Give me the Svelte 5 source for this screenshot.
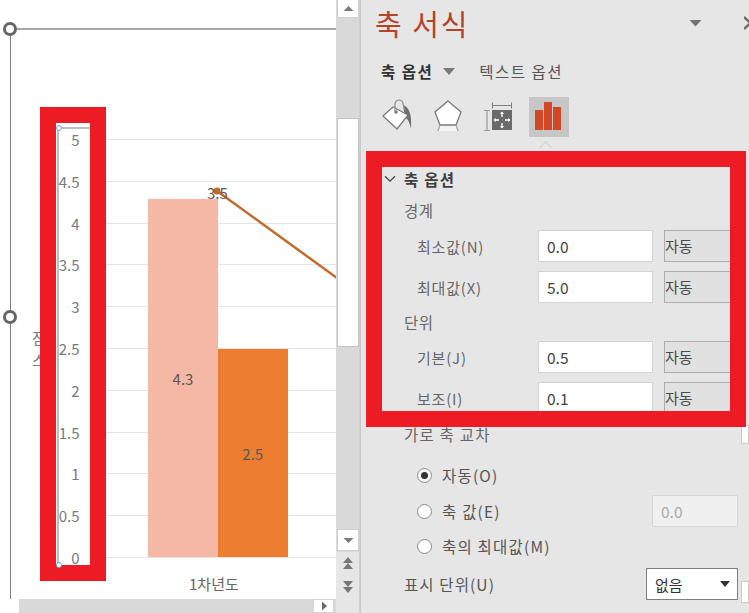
<script>
  const ticks = ['5','4.5','4','3.5','3','2.5','2','1.5','1','0.5','0'];
  const bounds = [['최소값(N)','0.0'],['최대값(X)','5.0']];
  const units = [['기본(J)','0.5'],['보조(I)','0.1']];
</script>

<div class="app">
  <div class="editor">
    <div class="chart">
      <div class="frame-top"></div>
      <div class="frame-left"></div>
      <span class="handle h1"></span>
      <span class="handle h2"></span>
      <span class="axis-title t1">점</span>
      <span class="axis-title t2">스</span>

      {#each ticks as t, i}
        <div class="grid" style="top:{139 + i * 41.8}px"></div>
      {/each}

      <div class="bar pink">4.3</div>
      <div class="bar orange">2.5</div>
      <span class="cat">1차년도</span>

      <svg class="line" width="337" height="300" viewBox="0 0 337 300">
        <line x1="217" y1="191" x2="337" y2="278" stroke="#c5692d" stroke-width="2.5"/>
        <circle cx="217" cy="191" r="3.6" fill="#c5692d"/>
      </svg>
      <span class="pt">3.5</span>

      <div class="red-v">
        <div class="axis"></div>
        <span class="blue b1"></span>
        <span class="blue b2"></span>
        {#each ticks as t, i}
          <span class="tick" style="top:{6 + i * 41.8}px">{t}</span>
        {/each}
      </div>
    </div>

    <div class="hbar">
      <div class="hbtn first"></div>
      <div class="htrack"></div>
      <div class="hbtn last">
        <svg width="8" height="10" viewBox="0 0 8 10"><path d="M2 0.5 7 5 2 9.5z" fill="#6a6a6a"/></svg>
      </div>
    </div>
  </div>

  <div class="vbar">
    <div class="vtrack">
      <div class="vbtn top">
        <svg width="11" height="7" viewBox="0 0 11 7"><path d="M5.5 1 10.5 6H.5z" fill="#7a7a7a"/></svg>
      </div>
      <div class="thumb"></div>
      <div class="vbtn bottom">
        <svg width="11" height="7" viewBox="0 0 11 7"><path d="M5.5 6 10.5 1H.5z" fill="#7a7a7a"/></svg>
      </div>
    </div>
    <div class="pg">
      <svg width="12" height="13" viewBox="0 0 12 13"><path d="M6 0 11 6H1zM6 6 11 12H1z" fill="#777"/></svg>
      <svg width="12" height="13" viewBox="0 0 12 13"><path d="M6 6 11 0H1zM6 12 11 6H1z" fill="#777"/></svg>
    </div>
  </div>

  <div class="panel">
    <header class="title-row">
      <h1>축 서식</h1>
      <svg class="tri-title" width="13" height="8" viewBox="0 0 13 8"><path d="M0.5 1h12L6.5 7.5z" fill="#737373"/></svg>
      <svg class="close" width="8" height="14" viewBox="0 0 8 14"><path d="M0 1 6.5 7 0 13" fill="none" stroke="#6e6e6e" stroke-width="2.4"/></svg>
    </header>

    <div class="tabs">
      <span class="tab on">축 옵션</span>
      <svg width="12" height="7" viewBox="0 0 12 7"><path d="M0 0h12L6 7z" fill="#7a7a7a"/></svg>
      <span class="tab">텍스트 옵션</span>
    </div>

    <div class="icons">
      <svg class="ic" width="40" height="40" viewBox="0 0 40 40">
        <path d="M24 8c6 2 9 9 8 24-1-6-3-10-6-12z" fill="#6e6e6e"/>
        <path d="M14 10 29 18 18 32 4 19z" fill="#fff" stroke="#7a7a7a" stroke-width="1.3"/>
        <path d="M16 14V7a4 4 0 0 1 8 0l2 6" fill="none" stroke="#8a8a8a" stroke-width="1.2"/>
        <circle cx="17" cy="15" r="1.8" fill="#7a7a7a"/>
      </svg>
      <svg class="ic" width="40" height="40" viewBox="0 0 40 40">
        <path d="M21 4 34 15 29 28H13L8 15z" fill="#fff" stroke="#7f7f7f" stroke-width="1.4"/>
        <rect x="12" y="29" width="18" height="5" fill="#f4f4f4"/>
        <path d="M13 28 11 34M29 28 31 34" stroke="#a5a5a5" stroke-width="1.3"/>
      </svg>
      <svg class="ic size" width="40" height="40" viewBox="0 0 40 40">
        <path d="M11 8.500H31M11.500 5.500v6M30.500 5.500v6" stroke="#7f7f7f" fill="none"/>
        <path d="M3 13.500h6M3 33.500h6M6 13.500v20" stroke="#9a9a9a" fill="none" stroke-width="1.2"/>
        <rect x="11" y="13" width="20" height="20" fill="#6a6a6a"/>
        <path d="M21 15v5M21 26v5M13 23h5M24 23h5" stroke="#fff" stroke-width="1.3"/>
        <path d="M21 14.500l-2 2.500h4zM21 31.500l-2-2.500h4zM12.500 23l2.500-2v4zM29.500 23l-2.500-2v4z" fill="#fff"/>
      </svg>
      <div class="ic-on">
        <svg width="40" height="40" viewBox="0 0 40 40">
          <rect x="6" y="13" width="8" height="20" fill="#d24726"/>
          <rect x="15" y="5" width="8" height="28" fill="#d24726"/>
          <rect x="24" y="10" width="8" height="23" fill="#d24726"/>
        </svg>
      </div>
    </div>

    <div class="notch"></div>

    <section class="form">
      <div class="sec-head">
        <svg width="12" height="8" viewBox="0 0 12 8"><path d="M1 1.200 6 6.200 11 1.200" fill="none" stroke="#444" stroke-width="1.300"/></svg>
        <span>축 옵션</span>
      </div>

      <div class="group">경계</div>
      {#each bounds as [label, val]}
        <div class="row">
          <span class="lab">{label}</span>
          <div class="input">{val}</div>
          <div class="auto">자동</div>
        </div>
      {/each}

      <div class="group g2">단위</div>
      {#each units as [label, val]}
        <div class="row">
          <span class="lab">{label}</span>
          <div class="input">{val}</div>
          <div class="auto">자동</div>
        </div>
      {/each}

      <div class="group g3">가로 축 교차</div>

      <div class="radio r1"><span class="dot checked"></span><span>자동(O)</span></div>
      <div class="radio r2">
        <span class="dot"></span><span>축 값(E)</span>
        <div class="disabled">0.0</div>
      </div>
      <div class="radio r3"><span class="dot"></span><span>축의 최대값(M)</span></div>

      <div class="unit-row">
        <span>표시 단위(U)</span>
        <div class="select">
          <span>없음</span>
          <svg width="10" height="6" viewBox="0 0 10 6"><path d="M0 0h10L5 6z" fill="#333"/></svg>
        </div>
      </div>
    </section>

    <div class="pscroll p1"></div>
    <div class="pscroll p2"></div>
    <div class="red-h"></div>
  </div>
</div>

<style>
  :global(body) { margin: 0; background: #e6e6e6; }
  .app {
    width: 749px; height: 613px; overflow: hidden; display: flex;
    font-family: "Noto Sans CJK KR", "Liberation Sans", sans-serif;
    color: #595959; background: #e6e6e6;
  }
  .editor { width: 336px; flex: none; display: flex; flex-direction: column; }
  .chart { position: relative; height: 599px; background: #fff; overflow: hidden; }
  .frame-top { position: absolute; left: 10px; right: 0; top: 28px; height: 2px; background: #a8a8a8; }
  .frame-left { position: absolute; left: 10px; top: 29px; bottom: 0; width: 1px; background: #7f7f7f; }
  .handle { position: absolute; width: 8px; height: 8px; border: 3px solid #666; border-radius: 50%; background: #fff; left: 3px; }
  .h1 { top: 22px; }
  .h2 { top: 310px; }
  .axis-title { position: absolute; left: 32px; font-size: 15px; line-height: 20px; color: #7a7a7a; }
  .t1 { top: 328px; }
  .t2 { top: 350px; }
  .grid { position: absolute; left: 58px; right: 0; height: 1px; background: #e4e4e4; }
  .bar { position: absolute; display: flex; align-items: center; justify-content: center; font-size: 15px; color: #595959; }
  .pink { left: 148px; top: 199px; width: 70px; height: 358px; background: #f4b8a5; }
  .orange { left: 218px; top: 349px; width: 69.500px; height: 208px; background: #ed7d31; }
  .cat { position: absolute; left: 189px; top: 573px; font-size: 15px; line-height: 22px; color: #666; }
  .line { position: absolute; left: 0; top: 0; }
  .pt { position: absolute; left: 207px; top: 182px; font-size: 15px; line-height: 22px; color: #595959; }

  .red-v { position: absolute; left: 40px; top: 107px; width: 34px; height: 442px; border: 16px solid #ed1c24; background: #fff; }
  .axis { position: absolute; left: 1px; top: 4px; bottom: 0; width: 2px; background: #bfbfbf; }
  .axis::before { content: ""; position: absolute; left: 0; top: 0; width: 33px; height: 2px; background: #bfbfbf; }
  .blue { position: absolute; width: 4px; height: 4px; border: 1px solid #5aa9e6; border-radius: 50%; background: #fff; }
  .b1 { left: 0; top: 2px; }
  .b2 { left: 0; bottom: -3px; }
  .tick { position: absolute; right: 10.500px; font-size: 15px; line-height: 22px; color: #7a7a7a; }

  .hbar { display: flex; height: 14px; background: #d9d9d9; }
  .hbtn { background: #fff; }
  .first { width: 19px; }
  .htrack { flex: 1; }
  .last { width: 21px; margin-right: 2px; display: flex; align-items: center; justify-content: center; border: 1px solid #d4d4d4; box-sizing: border-box; }

  .vbar { width: 24px; flex: none; display: flex; flex-direction: column; border-right: 1px solid #cfcfcf; box-sizing: border-box; }
  .vtrack { height: 552px; background: #d9d9d9; position: relative; }
  .vbtn { position: absolute; left: 1px; width: 22px; background: #fff; border: 1px solid #d0d0d0; box-sizing: border-box; display: flex; align-items: center; justify-content: center; }
  .top { top: -2px; height: 20px; }
  .bottom { top: 529px; height: 22px; }
  .thumb { position: absolute; left: 1px; top: 118px; width: 22px; height: 229px; background: #fff; border: 1px solid #c4c4c4; box-sizing: border-box; }
  .pg { display: flex; flex-direction: column; align-items: center; gap: 11px; padding-top: 5px; background: #e6e6e6; }

  .panel { position: relative; flex: 1; border-left: 1px solid #c8c8c8; padding-left: 14px; overflow: hidden; }
  .title-row { height: 58px; position: relative; }
  h1 { margin: 0; padding-top: 3px; font-size: 29px; line-height: 40px; font-weight: 400; color: #b5432a; letter-spacing: 2px; }
  .tri-title { position: absolute; left: 314px; top: 19px; }
  .close { position: absolute; left: 369px; top: 16px; }
  .tabs { display: flex; align-items: center; height: 26px; padding-left: 6px; gap: 10px; font-size: 15.500px; letter-spacing: 1.500px; }
  .tab { color: #555; }
  .tab.on { font-weight: 700; color: #333; }
  .tabs svg { margin-right: 14px; }
  .icons { display: flex; align-items: center; height: 40px; margin: 13px 0 0 -1px; padding-left: 5px; gap: 8px; }
  .ic { flex: none; }
  .size { margin-left: 6px; }
  .ic-on { width: 40px; height: 40px; background: #c6c6c6; flex: none; }
  .notch { position: absolute; left: 180px; top: 143px; width: 8px; height: 8px; background: #e6e6e6; border: 1px solid #cdcdcd; border-right: 0; border-bottom: 0; transform: rotate(45deg); }

  .form { position: absolute; left: 43px; right: 0; top: 167px; color: #666; }
  .sec-head { display: flex; align-items: center; gap: 8px; height: 24px; margin-left: -20px; font-weight: 700; color: #404040; }
  .sec-head span { letter-spacing: 1.200px; font-size: 15.500px; }
  .group { font-size: 15.500px; line-height: 22px; letter-spacing: .5px; margin-top: 8px; height: 22px; color: #666; }
  .group + .row { margin-top: 9px; }
  .g2 + .row { margin-top: 8px; }
  .g3 { margin-top: 9px; letter-spacing: 1.200px; }
  .row { display: flex; align-items: center; height: 32px; margin-bottom: 9px; padding-left: 13px; }
  .row:has(+ .group) { margin-bottom: 8px; }
  .lab { width: 121px; flex: none; font-size: 15px; letter-spacing: .8px; color: #666; }
  .input { width: 115px; height: 32px; box-sizing: border-box; background: #fff; border: 1px solid #d4d4d4; padding-left: 8px; font-size: 15.500px; line-height: 30px; color: #444; flex: none; }
  .auto { margin-left: 11px; width: 74px; height: 32px; box-sizing: border-box; background: #e1e1e1; border: 1px solid #adadad; font-size: 15px; line-height: 30px; color: #4a4a4a; flex: none; }
  .radio { position: relative; display: flex; align-items: center; height: 22px; padding-left: 13px; gap: 10px; font-size: 15.500px; letter-spacing: 1.200px; color: #555; }
  .dot { width: 13px; height: 13px; border: 1px solid #8a8a8a; border-radius: 50%; background: #fff; position: relative; flex: none; }
  .checked::after { content: ""; position: absolute; left: 3px; top: 3px; width: 7px; height: 7px; border-radius: 50%; background: #333; }
  .r1 { margin-top: 19px; }
  .r2 { margin-top: 14px; }
  .r3 { margin-top: 13px; }
  .disabled { position: absolute; left: 248px; top: -5px; width: 86px; height: 32px; box-sizing: border-box; background: #f0f0f0; border: 1px solid #d6d6d6; padding-left: 8px; font-size: 15.500px; line-height: 30px; letter-spacing: 0; color: #ababab; }
  .unit-row { position: relative; display: flex; align-items: center; height: 32px; margin-top: 11px; font-size: 15.500px; letter-spacing: 1.100px; color: #555; }
  .select { position: absolute; left: 242px; top: 0; width: 92px; height: 32px; box-sizing: border-box; background: #fff; border: 1px solid #7f7f7f; display: flex; align-items: center; justify-content: space-between; padding: 0 7px 0 8px; color: #333; font-size: 15px; letter-spacing: 0; }
  .pscroll { position: absolute; left: 380px; width: 8px; background: #fff; border: 1px solid #c8c8c8; box-sizing: border-box; }
  .p1 { top: 425px; height: 19px; }
  .p2 { top: 581px; height: 22px; }
  .red-h { position: absolute; left: 5px; top: 151px; width: 348px; height: 244px; border: 16px solid #ed1c24; }
</style>
